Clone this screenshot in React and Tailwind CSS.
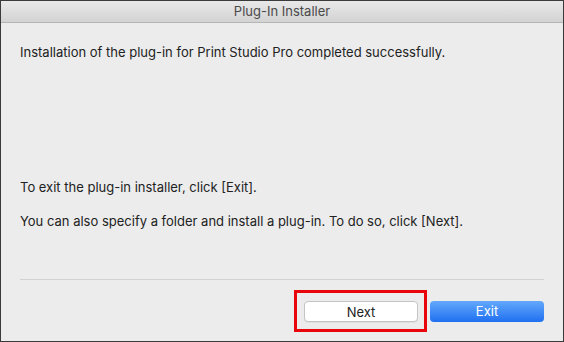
import React from 'react';

const font = { fontFamily: 'Inter, "Liberation Sans", Arial, sans-serif' };

const App = () => {
  return (
    <div
      className="w-[564px] h-[342px] flex flex-col bg-[#ececec] border border-[#3a3a3a] overflow-hidden"
      style={font}
    >
      <div className="h-[22px] shrink-0 flex items-center justify-center bg-gradient-to-b from-[#e8e8e8] to-[#d3d3d3] border-b border-[#b5b5b5]">
        <span className="text-[13px] text-[#4a4a4a] leading-none">Plug-In Installer</span>
      </div>

      <div className="flex-1 flex flex-col px-[19px] text-[13px] leading-[16px] text-[#222]">
        <p className="mt-[21px]">Installation of the plug-in for Print Studio Pro completed successfully.</p>

        <p className="mt-auto">To exit the plug-in installer, click [Exit].</p>
        <p className="mt-[18px]">You can also specify a folder and install a plug-in. To do so, click [Next].</p>

        <div className="mt-[50px] h-px bg-[#d2d2d2]" />

        <div className="mt-[10px] mb-[9px] flex items-center justify-end gap-[3px]">
          <div className="border-[3px] border-[#e8060c] pl-[7px] pr-[6px] pt-[8px] pb-[7px]">
            <button className="w-[114px] h-[21px] rounded-[4px] bg-white border border-[#c4c4c4] text-[13px] text-[#222] shadow-[0_1px_0_rgba(0,0,0,0.05)]">
              Next
            </button>
          </div>
          <button className="w-[114px] h-[21px] rounded-[4px] bg-gradient-to-b from-[#62a8fb] to-[#1f6ff0] text-[13px] text-white">
            Exit
          </button>
        </div>
      </div>
    </div>
  );
};

export default App;
